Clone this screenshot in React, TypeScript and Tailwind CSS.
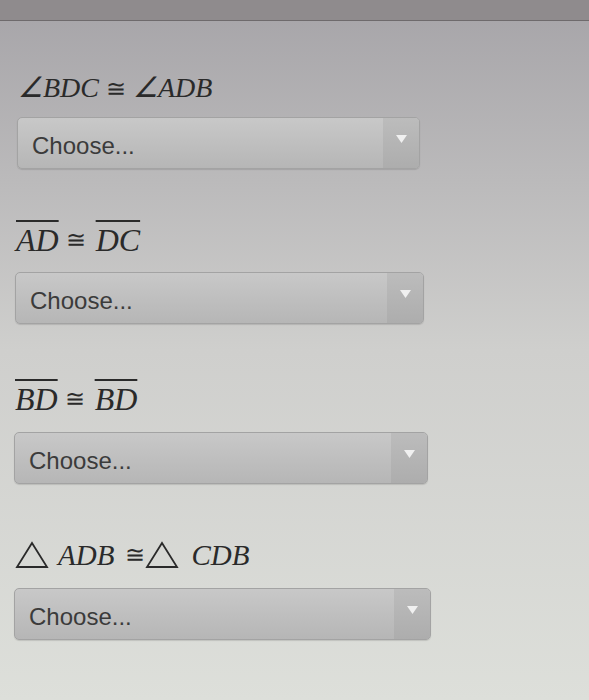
import React from 'react';

const Choose: React.FC<{ className?: string }> = ({ className }) => (
  <div
    className={`flex h-[52px] items-stretch overflow-hidden rounded-[5px] border border-[#a3a3a3] bg-gradient-to-b from-[#c8c8c8] to-[#b6b6b6] shadow-[0_1px_1px_rgba(0,0,0,0.12)] ${className ?? ''}`}
  >
    <div className="flex flex-1 items-center pl-[14px] pt-[5px] text-[24px] text-[#3b3b3b] [font-family:'Liberation_Sans',Arial,sans-serif]">
      Choose...
    </div>
    <div className="flex w-[36px] items-start justify-center bg-gradient-to-b from-[#bcbcbc] to-[#adadad] pt-[17px]">
      <svg width="11" height="8" viewBox="0 0 11 8">
        <path d="M0 0 L11 0 L5.5 8 Z" fill="#f0f0f0" />
      </svg>
    </div>
  </div>
);

const Tri = () => (
  <svg width="34" height="28" viewBox="0 0 34 28" className="inline-block align-[-4px]">
    <path d="M17 2 L32 26 L2 26 Z" fill="none" stroke="#2a2a2a" strokeWidth="1.8" />
  </svg>
);

export default function App() {
  return (
    <div className="h-[700px] w-[589px] overflow-hidden bg-gradient-to-b from-[#a6a4a8] via-[#cfcfcd] to-[#dddfda] text-[#2a2a2a]">
      <div className="h-[21px] border-b border-[#6e6a6c] bg-[#8f8b8d]" />
      <div className="flex flex-col [font-family:'Liberation_Serif','Times_New_Roman',serif] italic">
        <div className="mt-[50px] ml-[18px] h-[34px] text-[28px] leading-[34px]">
          ∠BDC <span className="not-italic text-[24px]">≅</span> ∠ADB
        </div>
        <Choose className="mt-[12px] ml-[17px] w-[403px] not-italic" />

        <div className="mt-[54px] ml-[16px] flex h-[34px] items-center text-[32px] leading-[34px]">
          <span className="overline decoration-[1.5px]">AD</span>
          <span className="ml-[7px] not-italic text-[24px]">≅</span>
          <span className="ml-[10px] overline decoration-[1.5px]">DC</span>
        </div>
        <Choose className="mt-[15px] ml-[15px] w-[409px] not-italic" />

        <div className="mt-[58px] ml-[15px] flex h-[34px] items-center text-[32px] leading-[34px]">
          <span className="overline decoration-[1.5px]">BD</span>
          <span className="ml-[7px] not-italic text-[24px]">≅</span>
          <span className="ml-[10px] overline decoration-[1.5px]">BD</span>
        </div>
        <Choose className="mt-[16px] ml-[14px] w-[414px] not-italic" />

        <div className="mt-[54px] ml-[15px] flex h-[34px] items-center text-[29px] leading-[34px]">
          <Tri />
          <span className="ml-[9px]">ADB</span>
          <span className="ml-[11px] not-italic text-[24px]">≅</span>
          <Tri />
          <span className="ml-[12px]">CDB</span>
        </div>
        <Choose className="mt-[16px] ml-[14px] w-[417px] not-italic" />
      </div>
    </div>
  );
}
